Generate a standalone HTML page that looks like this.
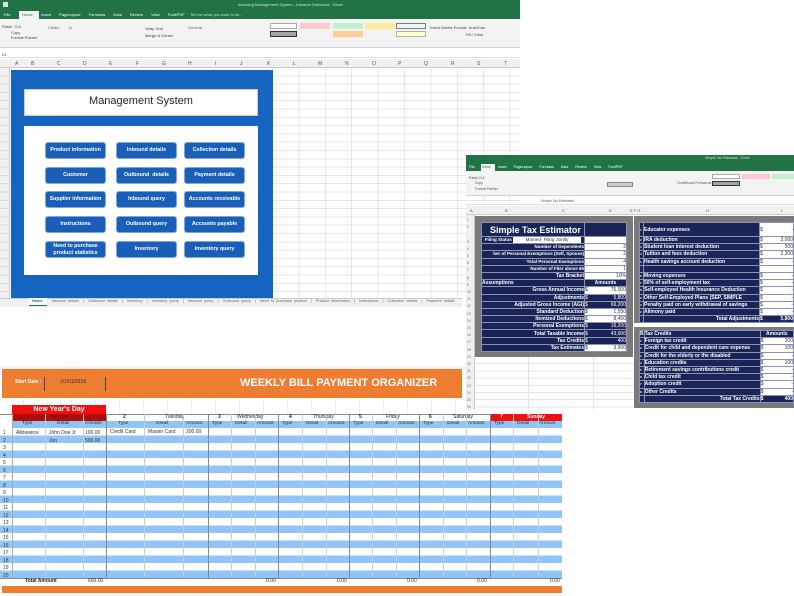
<!DOCTYPE html>
<html><head><meta charset="utf-8">
<style>
*{margin:0;padding:0;box-sizing:border-box}
body{width:794px;height:596px;position:relative;overflow:hidden;background:#fff;font-family:"Liberation Sans",sans-serif}
.a{position:absolute}
.t{position:absolute;white-space:nowrap;line-height:1}
.btn{position:absolute;width:61px;height:17px;background:#1a5fb7;border:1px solid #7fa6d8;border-radius:3px;color:#fff;font-size:5.3px;font-weight:bold;display:flex;align-items:center;justify-content:center;text-align:center;line-height:1.15}
.rib{background:#f3f3f3;border-bottom:1px solid #d4d4d4}
.nav td{border:1px solid #8a93b5}
table{border-collapse:collapse}
</style></head><body>

<!-- ===== Excel 1 ===== -->
<div class="a" style="left:0;top:0;width:520px;height:19px;background:#217346"></div>
<div class="t" style="left:238px;top:3px;font-size:4px;color:#cfe3d7">Invoicing Management System - Inbound Outbound - Excel</div>
<div class="a" style="left:3px;top:2px;width:5px;height:5px;background:#fff;opacity:.8"></div>
<div class="a" style="left:19px;top:11px;width:20px;height:8px;background:#f3f3f3"></div>
<div class="t" style="left:4px;top:13px;font-size:4px;color:#fff">File</div>
<div class="t" style="left:22px;top:13px;font-size:4px;color:#217346">Home</div>
<div class="t" style="left:41px;top:13px;font-size:4px;color:#fff;word-spacing:7px">Insert PageLayout Formulas Data Review View FoxitPDF</div>
<div class="t" style="left:190px;top:13px;font-size:4px;color:#bfe0cc">Tell me what you want to do...</div>
<div class="a rib" style="left:0;top:19px;width:520px;height:29px"></div>
<div class="a" style="left:270px;top:23px;width:27px;height:6px;background:#fff;border:1px solid #aaa"></div>
<div class="a" style="left:300px;top:23px;width:30px;height:6px;background:#ffc7ce"></div>
<div class="a" style="left:333px;top:23px;width:30px;height:6px;background:#c6efce"></div>
<div class="a" style="left:365px;top:23px;width:30px;height:6px;background:#ffeb9c"></div>
<div class="a" style="left:396px;top:23px;width:30px;height:6px;background:#f2f2f2;border:1px solid #7f7f7f"></div>
<div class="a" style="left:270px;top:31px;width:27px;height:6px;background:#a5a5a5;border:1px solid #333"></div>
<div class="a" style="left:333px;top:31px;width:30px;height:6px;background:#ffcc99"></div>
<div class="a" style="left:396px;top:31px;width:30px;height:6px;background:#ffffcc;border:1px solid #b2b2b2"></div>
<div class="t" style="left:2px;top:24px;font-size:4px;color:#444;line-height:1.4">Paste &nbsp;Cut<br>&nbsp;&nbsp;&nbsp;&nbsp;&nbsp;&nbsp;&nbsp;&nbsp;Copy<br>&nbsp;&nbsp;&nbsp;&nbsp;&nbsp;&nbsp;&nbsp;&nbsp;Format Painter</div>
<div class="t" style="left:48px;top:26px;font-size:4px;color:#666">Calibri &nbsp;&nbsp;&nbsp;&nbsp;&nbsp;&nbsp;&nbsp;11</div>
<div class="t" style="left:145px;top:25px;font-size:4px;color:#444;line-height:1.8">Wrap Text<br>Merge &amp; Center</div>
<div class="t" style="left:188px;top:26px;font-size:4px;color:#666">General</div>
<div class="t" style="left:430px;top:24px;font-size:4px;color:#444;line-height:1.8">Insert Delete Format &nbsp;AutoSum<br>&nbsp;&nbsp;&nbsp;&nbsp;&nbsp;&nbsp;&nbsp;&nbsp;&nbsp;&nbsp;&nbsp;&nbsp;&nbsp;&nbsp;&nbsp;&nbsp;&nbsp;&nbsp;&nbsp;&nbsp;&nbsp;&nbsp;&nbsp;&nbsp;&nbsp;&nbsp;&nbsp;&nbsp;&nbsp;&nbsp;&nbsp;&nbsp;Fill / Clear</div>
<div class="t" style="left:2px;top:53px;font-size:4px;color:#555">A1</div>
<div class="a" style="left:0;top:50px;width:520px;height:8px;border-bottom:1px solid #ddd"></div>
<div class="a" style="left:0;top:59px;width:520px;height:9px;background:#f0f0f0;border-bottom:1px solid #ccc"></div>
<div class="t" style="left:15px;top:62px;font-size:5px;color:#555;word-spacing:0">A</div>
<div class="t" style="left:0;top:62px;width:520px;font-size:5px;color:#555">
<span class="t" style="left:31px">B</span><span class="t" style="left:57px">C</span><span class="t" style="left:83px">D</span><span class="t" style="left:109px">E</span><span class="t" style="left:136px">F</span><span class="t" style="left:162px">G</span><span class="t" style="left:188px">H</span><span class="t" style="left:215px">I</span><span class="t" style="left:240px">J</span><span class="t" style="left:267px">K</span><span class="t" style="left:293px">L</span><span class="t" style="left:318px">M</span><span class="t" style="left:345px">N</span><span class="t" style="left:372px">O</span><span class="t" style="left:398px">P</span><span class="t" style="left:424px">Q</span><span class="t" style="left:451px">R</span><span class="t" style="left:477px">S</span><span class="t" style="left:504px">T</span></div>
<div class="a" style="left:0;top:68px;width:10px;height:230px;background:#f0f0f0;border-right:1px solid #ccc;background-image:repeating-linear-gradient(#f0f0f0 0 7.3px,#d8d8d8 7.3px 8.3px)"></div>
<div class="a" style="left:273px;top:68px;width:247px;height:230px;background:repeating-linear-gradient(90deg,transparent 0 25.4px,#e6e6e6 25.4px 26.4px),repeating-linear-gradient(transparent 0 7.3px,#e6e6e6 7.3px 8.3px)"></div>
<!-- blue box -->
<div class="a" style="left:11px;top:70px;width:262px;height:228px;background:#1565c0"></div>
<div class="a" style="left:24px;top:89px;width:234px;height:27px;background:#fff;border:1px solid #ccc"></div>
<div class="t" style="left:24px;top:96px;width:234px;text-align:center;font-size:11px;color:#222">Management System</div>
<div class="a" style="left:24px;top:126px;width:234px;height:149px;background:#fff"></div>
<div class="btn" style="left:45px;top:142px">Product information</div>
<div class="btn" style="left:116px;top:142px">Inbound details</div>
<div class="btn" style="left:184px;top:142px">Collection details</div>
<div class="btn" style="left:45px;top:167px">Customer</div>
<div class="btn" style="left:116px;top:167px">Outbound &nbsp;details</div>
<div class="btn" style="left:184px;top:167px">Payment details</div>
<div class="btn" style="left:45px;top:191px">Supplier information</div>
<div class="btn" style="left:116px;top:191px">Inbound query</div>
<div class="btn" style="left:184px;top:191px">Accounts receivable</div>
<div class="btn" style="left:45px;top:216px">Instructions</div>
<div class="btn" style="left:116px;top:216px">Outbound query</div>
<div class="btn" style="left:184px;top:216px">Accounts payable</div>
<div class="btn" style="left:45px;top:241px">Need to purchase<br>product statistics</div>
<div class="btn" style="left:116px;top:241px">Inventory</div>
<div class="btn" style="left:184px;top:241px">Inventory query</div>
<div class="a" style="left:0;top:298px;width:462px;height:9px;background:#f0f0f0;border-top:1px solid #ccc"></div>
<div class="a" style="left:29px;top:298px;width:18px;height:8px;background:#fff;border-bottom:1px solid #217346"></div>
<div class="t" style="left:32px;top:300px;font-size:3.8px;color:#217346;font-weight:bold">Home</div>
<div class="t" style="left:52px;top:300px;font-size:3.8px;color:#666;word-spacing:1px">Inbound details &nbsp;|&nbsp; Outbound details &nbsp;|&nbsp; Inventory &nbsp;|&nbsp; Inventory query &nbsp;|&nbsp; Inbound query &nbsp;|&nbsp; Outbound query &nbsp;|&nbsp; Need to purchase product &nbsp;|&nbsp; Product information &nbsp;|&nbsp; Instructions &nbsp;|&nbsp; Collection details &nbsp;|&nbsp; Payment details</div>

<!-- ===== Excel 2 ===== -->
<div class="a" style="left:466px;top:155px;width:328px;height:16px;background:#217346"></div>
<div class="t" style="left:705px;top:157px;font-size:3.5px;color:#cfe3d7">Simple Tax Estimator - Excel</div>
<div class="a" style="left:481px;top:164px;width:14px;height:7px;background:#f3f3f3"></div>
<div class="t" style="left:469px;top:166px;font-size:3.5px;color:#fff;word-spacing:6px">File <span style="color:#217346">Home</span> Insert PageLayout Formulas Data Review View FoxitPDF</div>
<div class="a rib" style="left:466px;top:171px;width:328px;height:25px"></div>
<div class="a" style="left:712px;top:174px;width:28px;height:5px;background:#fff;border:1px solid #aaa"></div>
<div class="a" style="left:742px;top:174px;width:28px;height:5px;background:#ffc7ce"></div>
<div class="a" style="left:772px;top:174px;width:22px;height:5px;background:#c6efce"></div>
<div class="a" style="left:712px;top:181px;width:28px;height:5px;background:#a5a5a5;border:1px solid #333"></div>
<div class="a" style="left:607px;top:182px;width:26px;height:5px;background:#ccc;border:1px solid #888"></div>
<div class="t" style="left:469px;top:176px;font-size:3.5px;color:#555;line-height:1.5">Paste Cut<br>&nbsp;&nbsp;&nbsp;&nbsp;&nbsp;&nbsp;Copy<br>&nbsp;&nbsp;&nbsp;&nbsp;&nbsp;&nbsp;Format Painter</div>
<div class="t" style="left:677px;top:182px;font-size:3.5px;color:#555">Conditional Format as</div>
<div class="a" style="left:466px;top:197px;width:328px;height:8px;border-bottom:1px solid #ddd"></div>
<div class="t" style="left:541px;top:200px;font-size:3.5px;color:#555">Simple Tax Estimator</div>
<div class="a" style="left:466px;top:206px;width:328px;height:9px;background:#f0f0f0;border-bottom:1px solid #ccc"></div>
<div class="t" style="left:466px;top:209px;font-size:4px;color:#555;width:328px"><span class="t" style="left:4px">A</span><span class="t" style="left:39px">B</span><span class="t" style="left:96px">C</span><span class="t" style="left:143px">D</span><span class="t" style="left:164px">E F G</span><span class="t" style="left:240px">H</span><span class="t" style="left:315px">I</span></div>
<div class="a" style="left:466px;top:215px;width:9px;height:195px;background:#f0f0f0;border-right:1px solid #ccc"></div>
<div class="t" style="left:467px;top:217px;font-size:3.3px;color:#666;line-height:7.2px">1<br>2<br><br>3<br>4<br>5<br>6<br>7<br>8<br>9<br>10<br>11<br>12<br>13<br>14<br>15<br>16<br>17<br>18<br>19<br>20<br>21<br>22<br>23<br>24<br>25<br>26</div>
<div class="a" style="left:475px;top:357px;width:160px;height:53px;background:repeating-linear-gradient(transparent 0 6.2px,#e4e4e4 6.2px 7.2px),linear-gradient(90deg,transparent 53px,#e4e4e4 53px 54px,transparent 54px 118px,#e4e4e4 118px 119px,transparent 119px)"></div>
<!-- left tax panel -->
<div class="a" style="left:475px;top:216px;width:158px;height:141px;background:#7a7a7a"></div>
<table class="a nav" style="left:481px;top:222px;width:146px;font-size:5px;font-weight:bold;color:#fff;background:#1a2456">
<tr style="height:14px"><td style="width:103px;font-size:9px;padding-left:8px">Simple Tax Estimator</td><td></td></tr>
<tr style="height:7.2px;line-height:6px"><td style="text-align:right;padding-right:3px;font-size:4.5px">Filing Status <span style="display:inline-block;background:#fff;color:#333;width:68px;font-weight:normal;text-align:center">Married- Filing Jointly</span></td><td style="background:#fff"></td></tr>
<tr style="height:7.2px;line-height:6px"><td style="text-align:right;font-size:4.5px">Number of Dependents</td><td style="background:#fff;color:#333;text-align:right;font-weight:normal">2</td></tr>
<tr style="height:7.2px;line-height:6px"><td style="text-align:right;font-size:4.5px">ber of Personal Exemptions (Self, Spouse)</td><td style="background:#fff;color:#333;text-align:right;font-weight:normal">2</td></tr>
<tr style="height:7.2px;line-height:6px"><td style="text-align:right;font-size:4.5px">Total Personal Exemptions</td><td style="background:#fff;color:#333;text-align:right;font-weight:normal">4</td></tr>
<tr style="height:7.2px;line-height:6px"><td style="text-align:right;font-size:4.5px">Number of Filer above 65</td><td style="background:#fff;color:#333;text-align:right;font-weight:normal">1</td></tr>
<tr style="height:7.2px;line-height:6px"><td style="text-align:right">Tax Bracket</td><td style="background:#fff;color:#333;text-align:right;font-weight:normal">10%</td></tr>
<tr style="height:7.2px;line-height:6px"><td>Assumptions</td><td style="text-align:center">Amounts</td></tr>
<tr style="height:7.2px;line-height:6px"><td style="text-align:right">Gross Annual Income</td><td style="background:#fff;color:#333;font-weight:normal">$<span style="float:right">75,000</span></td></tr>
<tr style="height:7.2px;line-height:6px"><td style="text-align:right">Adjustments</td><td style="font-weight:normal">$<span style="float:right">5,800</span></td></tr>
<tr style="height:7.2px;line-height:6px"><td style="text-align:right">Adjusted Gross Income (AGI)</td><td style="font-weight:normal">$<span style="float:right">69,200</span></td></tr>
<tr style="height:7.2px;line-height:6px"><td style="text-align:right">Standard Deduction</td><td style="background:#fff;color:#333;font-weight:normal">$<span style="float:right">1,550</span></td></tr>
<tr style="height:7.2px;line-height:6px"><td style="text-align:right">Itemized Deductions</td><td style="background:#fff;color:#333;font-weight:normal">$<span style="float:right">8,450</span></td></tr>
<tr style="height:7.2px;line-height:6px"><td style="text-align:right">Personal Exemptions</td><td style="font-weight:normal">$<span style="float:right">16,200</span></td></tr>
<tr style="height:7.2px;line-height:6px"><td style="text-align:right">Total Taxable Income</td><td style="font-weight:normal">$<span style="float:right">43,000</span></td></tr>
<tr style="height:7.2px;line-height:6px"><td style="text-align:right">Tax Credits</td><td style="font-weight:normal">$<span style="float:right">400</span></td></tr>
<tr style="height:7.2px;line-height:6px"><td style="text-align:right">Tax Estimates</td><td style="background:#fff;color:#333;font-weight:normal">$<span style="float:right">3,900</span></td></tr>
</table>
<!-- right tax panel -->
<div class="a" style="left:634px;top:216px;width:160px;height:107px;background:#7a7a7a"></div>
<table class="a nav" style="left:639px;top:222px;width:155px;font-size:5px;font-weight:bold;color:#fff;background:#1a2456;line-height:6px">
<tr style="height:14px"><td style="width:4px;font-size:3px">1</td><td style="width:116px">Educator expenses</td><td style="background:#fff;color:#333;font-weight:normal">$<span style="float:right">-</span></td></tr>
<tr style="height:7.2px"><td style="font-size:3px">2</td><td>IRA deduction</td><td style="background:#fff;color:#333;font-weight:normal">$<span style="float:right">3,000</span></td></tr>
<tr style="height:7.2px"><td style="font-size:3px">3</td><td>Student loan interest deduction</td><td style="background:#fff;color:#333;font-weight:normal">$<span style="float:right">500</span></td></tr>
<tr style="height:7.2px"><td style="font-size:3px">4</td><td>Tuition and fees deduction</td><td style="background:#fff;color:#333;font-weight:normal">$<span style="float:right">2,300</span></td></tr>
<tr style="height:7.2px"><td style="font-size:3px">5</td><td>Health savings account deduction</td><td style="background:#fff;color:#333;font-weight:normal">$<span style="float:right">-</span></td></tr>
<tr style="height:7.2px"><td></td><td></td><td style="background:#fff"></td></tr>
<tr style="height:7.2px"><td style="font-size:3px">6</td><td>Moving expenses</td><td style="background:#fff;color:#333;font-weight:normal">$<span style="float:right">-</span></td></tr>
<tr style="height:7.2px"><td style="font-size:3px">7</td><td>50% of self-employment tax</td><td style="background:#fff;color:#333;font-weight:normal">$<span style="float:right">-</span></td></tr>
<tr style="height:7.2px"><td style="font-size:3px">8</td><td>Self-employed Health Insurance Deduction</td><td style="background:#fff;color:#333;font-weight:normal">$<span style="float:right">-</span></td></tr>
<tr style="height:7.2px"><td style="font-size:3px">9</td><td>Other Self-Employed Plans (SEP, SIMPLE</td><td style="background:#fff;color:#333;font-weight:normal">$<span style="float:right">-</span></td></tr>
<tr style="height:7.2px"><td style="font-size:3px">#</td><td>Penalty paid on early withdrawal of savings</td><td style="background:#fff;color:#333;font-weight:normal">$<span style="float:right">-</span></td></tr>
<tr style="height:7.2px"><td style="font-size:3px">#</td><td>Alimony paid</td><td style="background:#fff;color:#333;font-weight:normal">$<span style="float:right">-</span></td></tr>
<tr style="height:7.2px"><td></td><td style="text-align:right">Total Adjustments</td><td>$<span style="float:right">5,800</span></td></tr>
</table>
<div class="a" style="left:634px;top:327px;width:160px;height:81px;background:#7a7a7a"></div>
<table class="a nav" style="left:639px;top:330px;width:155px;font-size:5px;font-weight:bold;color:#fff;background:#1a2456;line-height:6px">
<tr style="height:7.2px"><td style="width:4px">B</td><td style="width:116px">Tax Credits</td><td style="text-align:center">Amounts</td></tr>
<tr style="height:7.2px"><td style="font-size:3px">1</td><td>Foreign tax credit</td><td style="background:#fff;color:#333;font-weight:normal">$<span style="float:right">200</span></td></tr>
<tr style="height:7.2px"><td style="font-size:3px">2</td><td>Credit for child and dependent care expense</td><td style="background:#fff;color:#333;font-weight:normal">$<span style="float:right">100</span></td></tr>
<tr style="height:7.2px"><td style="font-size:3px">3</td><td>Credit for the elderly or the disabled</td><td style="background:#fff;color:#333;font-weight:normal">$<span style="float:right">-</span></td></tr>
<tr style="height:7.2px"><td style="font-size:3px">4</td><td>Education credits</td><td style="background:#fff;color:#333;font-weight:normal">$<span style="float:right">100</span></td></tr>
<tr style="height:7.2px"><td style="font-size:3px">5</td><td>Retirement savings contributions credit</td><td style="background:#fff;color:#333;font-weight:normal">$<span style="float:right">-</span></td></tr>
<tr style="height:7.2px"><td style="font-size:3px">6</td><td>Child tax credit</td><td style="background:#fff;color:#333;font-weight:normal">$<span style="float:right">-</span></td></tr>
<tr style="height:7.2px"><td style="font-size:3px">7</td><td>Adoption credit</td><td style="background:#fff;color:#333;font-weight:normal">$<span style="float:right">-</span></td></tr>
<tr style="height:7.2px"><td style="font-size:3px">8</td><td>Other Credits</td><td style="background:#fff;color:#333;font-weight:normal">$<span style="float:right">-</span></td></tr>
<tr style="height:7.2px"><td></td><td style="text-align:right">Total Tax Credits</td><td>$<span style="float:right">400</span></td></tr>
</table>

<!-- ===== Excel 3 : Bill organizer ===== -->
<div class="a" style="left:0;top:366px;width:466px;height:3px;background:#f2f2f2"></div>
<div class="a" style="left:2px;top:369px;width:460px;height:29px;background:#ef7d31"></div>
<div class="t" style="left:15px;top:380px;font-size:5px;font-weight:bold;color:#fff">Start Date :</div>
<div class="a" style="left:44px;top:377px;width:1px;height:14px;background:#444"></div>
<div class="a" style="left:105px;top:377px;width:1px;height:14px;background:#444"></div>
<div class="t" style="left:61px;top:380px;font-size:5px;color:#333">01/01/2018</div>
<div class="t" style="left:240px;top:378px;font-size:11px;font-weight:bold;color:#fff">WEEKLY BILL PAYMENT ORGANIZER</div>
<div class="a" style="left:0;top:398px;width:466px;height:16px;background:repeating-linear-gradient(90deg,transparent 0 23px,#eee 23px 24px)"></div>
<div class="a" style="left:12px;top:405px;width:94px;height:9px;background:#f01010"></div>
<div class="t" style="left:12px;top:406px;width:94px;text-align:center;font-size:7px;font-weight:bold;color:#fff">New Year's Day</div>
<!-- header row -->
<div class="a" style="left:0;top:414px;width:562px;height:7px;border-top:1px solid #888;background:#fff"></div>
<div class="a" style="left:12px;top:414px;width:94px;height:7px;background:#b00d0d"></div>
<div class="a" style="left:490px;top:414px;width:72px;height:7px;background:#f01010"></div>
<div class="t" style="left:0;top:415px;font-size:5px;color:#222;width:562px">
<span class="t" style="left:27px;color:#800">1</span><span class="t" style="left:51px;color:#800">Monday</span>
<span class="t" style="left:123px;font-weight:bold">2</span><span class="t" style="left:165px">Tuesday</span>
<span class="t" style="left:218px;font-weight:bold">3</span><span class="t" style="left:237px">Wednesday</span>
<span class="t" style="left:289px;font-weight:bold">4</span><span class="t" style="left:313px">Thursday</span>
<span class="t" style="left:359px;font-weight:bold">5</span><span class="t" style="left:386px">Friday</span>
<span class="t" style="left:429px;font-weight:bold">6</span><span class="t" style="left:453px">Saturday</span>
<span class="t" style="left:500px;color:#fff;font-weight:bold">7</span><span class="t" style="left:527px;color:#fff;font-weight:bold">Sunday</span></div>
<!-- sub header -->
<div class="a" style="left:12px;top:421px;width:550px;height:7px;background:#8ec5f5"></div>
<div class="t" style="left:0;top:422px;font-size:4.8px;color:#333;width:562px">
<span class="t" style="left:22px">Type</span><span class="t" style="left:57px">Detail</span><span class="t" style="left:85px">Amount</span>
<span class="t" style="left:118px">Type</span><span class="t" style="left:156px">Detail</span><span class="t" style="left:186px">Amount</span>
<span class="t" style="left:212px">Type</span><span class="t" style="left:235px">Detail</span><span class="t" style="left:257px">Amount</span>
<span class="t" style="left:282px">Type</span><span class="t" style="left:306px">Detail</span><span class="t" style="left:328px">Amount</span>
<span class="t" style="left:353px">Type</span><span class="t" style="left:376px">Detail</span><span class="t" style="left:398px">Amount</span>
<span class="t" style="left:423px">Type</span><span class="t" style="left:447px">Detail</span><span class="t" style="left:468px">Amount</span>
<span class="t" style="left:494px">Type</span><span class="t" style="left:517px">Detail</span><span class="t" style="left:539px">Amount</span></div>
<!-- data rows -->
<div class="a" style="left:0;top:428px;width:562px;height:150px;background:repeating-linear-gradient(#fff 0 7.5px,#91c5f7 7.5px 15px)"></div>
<div class="a" style="left:0;top:414px;width:562px;height:172px;background:linear-gradient(90deg,transparent 12px,#aaa 12px 13px,transparent 13px 45px,#ccc 45px 46px,transparent 46px 83px,#ccc 83px 84px,transparent 84px 106px,#888 106px 107px,transparent 107px 144px,#ccc 144px 145px,transparent 145px 183px,#ccc 183px 184px,transparent 184px 208px,#888 208px 209px,transparent 209px 231px,#ccc 231px 232px,transparent 232px 255px,#ccc 255px 256px,transparent 256px 278px,#888 278px 279px,transparent 279px 302px,#ccc 302px 303px,transparent 303px 326px,#ccc 326px 327px,transparent 327px 349px,#888 349px 350px,transparent 350px 372px,#ccc 372px 373px,transparent 373px 396px,#ccc 396px 397px,transparent 397px 419px,#888 419px 420px,transparent 420px 443px,#ccc 443px 444px,transparent 444px 466px,#ccc 466px 467px,transparent 467px 490px,#888 490px 491px,transparent 491px 513px,#ccc 513px 514px,transparent 514px 538px,#ccc 538px 539px,transparent 539px)"></div>
<div class="t" style="left:3px;top:430px;font-size:5px;color:#333;line-height:7.5px">1<br>2<br>3<br>4<br>5<br>6<br>7<br>8<br>9<br>10<br>11<br>12<br>13<br>14<br>15<br>16<br>17<br>18<br>19<br>20</div>
<div class="t" style="left:16px;top:430px;font-size:5px;color:#333;line-height:7.5px">Allowance</div>
<div class="t" style="left:49px;top:430px;font-size:5px;color:#333;line-height:7.5px">John Doe Jr<br>Jon</div>
<div class="t" style="left:85px;top:430px;font-size:5px;color:#333;line-height:7.5px">100.00<br>500.00</div>
<div class="t" style="left:110px;top:430px;font-size:5px;color:#333">Credit Card</div>
<div class="t" style="left:148px;top:430px;font-size:5px;color:#333">Master Card</div>
<div class="t" style="left:186px;top:430px;font-size:5px;color:#333">200.00</div>
<!-- total -->
<div class="a" style="left:0;top:578px;width:562px;height:8px;background:#fff;border-top:1px solid #888"></div>
<div class="t" style="left:25px;top:579px;font-size:5px;font-weight:bold;color:#222">Total Amount</div>
<div class="t" style="left:0;top:579px;font-size:5px;color:#333;width:562px"><span class="t" style="left:88px">600.00</span><span class="t" style="left:266px">0.00</span><span class="t" style="left:337px">0.00</span><span class="t" style="left:407px">0.00</span><span class="t" style="left:477px">0.00</span><span class="t" style="left:550px">0.00</span></div>
<div class="a" style="left:2px;top:586px;width:560px;height:7px;background:#ef7d31"></div>
</body></html>
